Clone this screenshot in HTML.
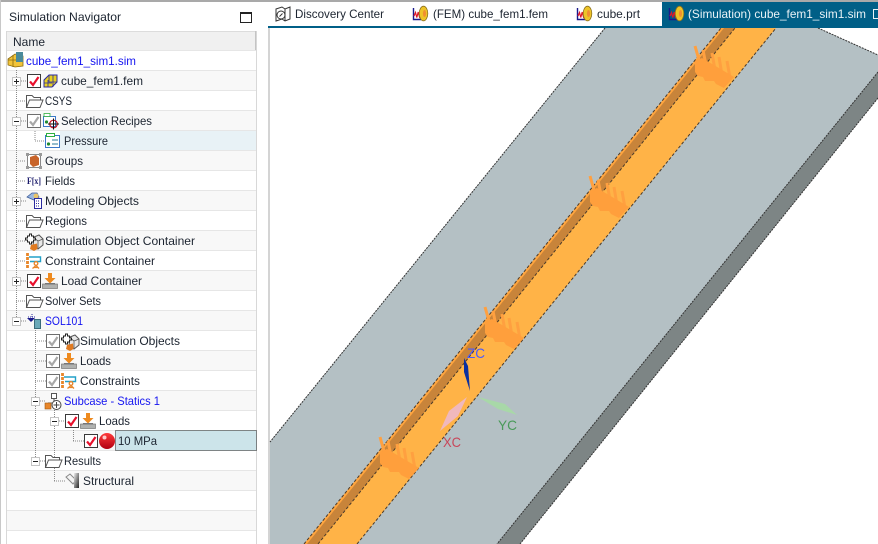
<!DOCTYPE html>
<html><head><meta charset="utf-8"><title>Simulation Navigator</title>
<style>
html,body{margin:0;padding:0;background:#fff;width:878px;height:544px;overflow:hidden}
svg{display:block}
text{font-family:"Liberation Sans",sans-serif;font-size:12px;fill:#1c2430}
.b{fill:#1414f0}
</style></head><body>
<svg width="878" height="544" viewBox="0 0 878 544" xmlns="http://www.w3.org/2000/svg">
<defs>
<g id="ck"><rect x=".5" y=".5" width="13" height="13" fill="#fff" stroke="#3a3a3a"/><path d="M3 7.5 L6 11 L11.5 3" fill="none" stroke="#e8102c" stroke-width="2.2"/></g>
<g id="gk"><rect x=".5" y=".5" width="13" height="13" fill="#fff" stroke="#6e6e6e"/><path d="M3 7.5 L6 11 L11.5 3" fill="none" stroke="#a8a8a8" stroke-width="2.2"/></g>
<g id="pl"><rect x=".5" y=".5" width="8" height="8" fill="#fff" stroke="#c4c4c4"/><path d="M2 4.500H7M4.500 2V7" stroke="#222"/></g>
<g id="mn"><rect x=".5" y=".5" width="8" height="8" fill="#fff" stroke="#c4c4c4"/><path d="M2 4.500H7" stroke="#222"/></g>
<g id="fo"><path d="M.5 14.500 V2.500 H6 L8 4.500 H14.500 V7 M.5 14.500 L3.500 7 H17 L14 14.500 Z" fill="#fff" stroke="#555"/></g>
<g id="ld"><path d="M6 0 H10 V5 H13.500 L8 10.500 L2.500 5 H6Z" fill="#ee8a1e"/><rect x="0.500" y="11" width="15" height="4.500" fill="#b0b2b0" stroke="#666" stroke-width=".6"/><rect x="3" y="10" width="10" height="1.500" fill="#777"/></g>
<g id="cn"><path d="M1.500 0 V16" stroke="#e8862a" stroke-width="2.800" stroke-dasharray="3 1"/><path d="M3 4 H14.500 V8.500 H4" fill="none" stroke="#22a0c8" stroke-width="1.400"/><circle cx="10" cy="10.500" r="1.800" fill="none" stroke="#e8862a" stroke-width="1.300"/><path d="M6.500 15.500 L10 12.500 L13 15.500 M8 14.500H12" fill="none" stroke="#e8862a" stroke-width="1.300"/></g>
<g id="so"><path d="M9 4 L14 2 L18 6 V12 L13 16 L8 13Z" fill="#e8e8e8" stroke="#555"/><path d="M13 8 L18 6 M13 8 V16 M13 8 L9 5" stroke="#555" fill="none" stroke-width=".8"/><path d="M6 12 L12 10.500 L12.500 16 L9 18 L5 16Z" fill="#e07a20"/><path d="M4.500 1 H6.500 V3 H8.500 V5 H10.500 V7 H8.500 V9 H6.500 V11 H4.500 V9 H2.500 V7 H.5 V5 H2.500 V3 H4.500Z" fill="#fff" stroke="#222" stroke-width="1"/></g>
<g id="pa"><path d="M1.500 2 V13.500 H9" fill="none" stroke="#1a1a8c" stroke-width="1.400"/><path d="M2 10 L3.500 6.500 L4.800 11.500 L6.200 6 L7.500 11 L9 8" fill="none" stroke="#e01828" stroke-width="1.200"/><ellipse cx="11.500" cy="7.500" rx="4.300" ry="7.300" fill="#eec428" stroke="#8a7020" stroke-width=".8"/><ellipse cx="12.500" cy="7.500" rx="1.600" ry="3.500" fill="#f09030"/></g>
<g id="comb"><path d="M590 176 L594 190 M598 180 L601 195 M607 183 L610 200 M614 187 L617 205 M622 191 L625 208" stroke="#ffa040" stroke-width="3" fill="none"/><path d="M590 191 L597 188 L629 207 L619 218 L611 214 L609 211 L600 211 L598 207 L593 206 L590 202Z" fill="#ff9f3c"/></g>
<linearGradient id="rb" x1="0" y1="0" x2="0" y2="1"><stop offset="0" stop-color="#ff3a3a"/><stop offset="1" stop-color="#b00010"/></linearGradient>
<linearGradient id="st" x1="0" y1="0" x2="1" y2="1"><stop offset="0" stop-color="#eee"/><stop offset="1" stop-color="#222"/></linearGradient>
</defs>

<!-- top lines -->
<rect x="0" y="0" width="878" height="2" fill="#a9a9a9"/>
<rect x="0" y="0" width="1" height="544" fill="#c8c8c8"/>
<rect x="268" y="27" width="2" height="517" fill="#d4d4d4"/>

<!-- viewport -->
<polygon points="605,28 818,28 878,55 878,72 497,544 270,544 270,442" fill="#b4c0c4"/>
<polygon points="878,72 878,98 520,544 497,544" fill="#7d8585"/>
<path d="M605 28 L270 442 M818 28 L878 55 M878 72 L497 544 M878 98 L520 544" stroke="#333" stroke-width="1" stroke-dasharray="2 1" fill="none"/>
<polygon points="304,544 721,28 776,28 357,544" fill="#ffb347"/>
<polygon points="304,544 721,28 725,28 307.500,544" fill="#ffa53f"/>
<polygon points="307,544 724,28 735,28 318,544" fill="#c8843a"/>
<path d="M304 544 L721 28 M318 544 L735 28 M357 544 L776 28" stroke="#4a3a2a" stroke-width="1" stroke-dasharray="3 2" fill="none"/>
<use href="#comb"/>
<use href="#comb" transform="translate(105,-130)"/>
<use href="#comb" transform="translate(-105,131)"/>
<use href="#comb" transform="translate(-210,261)"/>
<!-- triad -->
<polygon points="464,358 468,366 470,391 464,372" fill="#0a2fa0"/>
<polygon points="467,397 458,416 440,431 449,411" fill="#f0b8bc"/>
<polygon points="478,397 505,404 517,415 498,409" fill="#a8d8a8"/>
<text x="467" y="358" textLength="18" lengthAdjust="spacingAndGlyphs" style="fill:#4a5cff;font-size:14px">ZC</text>
<text x="443" y="447" textLength="18" lengthAdjust="spacingAndGlyphs" style="fill:#c8475a;font-size:14px">XC</text>
<text x="498" y="430" textLength="19" lengthAdjust="spacingAndGlyphs" style="fill:#4a9a5a;font-size:14px">YC</text>

<!-- tabs -->
<rect x="662" y="2" width="216" height="26" fill="#005f87"/>
<rect x="268" y="26" width="610" height="2" fill="#005f87"/>
<g fill="#fff" stroke="#333"><path d="M276 9 L282 7 L285 9 L290 7 V19 L285 21 L282 19 L276 21Z"/><path d="M285 9V21" fill="none"/><circle cx="281" cy="15" r="4"/><path d="M279.500 16.500L282.500 13.500" fill="none"/></g>
<text x="295" y="18" textLength="89" lengthAdjust="spacingAndGlyphs">Discovery Center</text>
<use href="#pa" x="412" y="6"/>
<text x="433" y="18" textLength="115" lengthAdjust="spacingAndGlyphs">(FEM) cube_fem1.fem</text>
<use href="#pa" x="576" y="6"/>
<text x="597" y="18" textLength="43" lengthAdjust="spacingAndGlyphs">cube.prt</text>
<use href="#pa" x="668" y="6"/>
<text x="688" y="18" textLength="178" lengthAdjust="spacingAndGlyphs" style="fill:#e8f2f6">(Simulation) cube_fem1_sim1.sim</text>
<rect x="873.500" y="9.500" width="6" height="9" fill="none" stroke="#e8f2f6"/>

<!-- navigator header -->
<text x="9" y="21" textLength="112" lengthAdjust="spacingAndGlyphs">Simulation Navigator</text>
<rect x="240.500" y="12.500" width="11" height="10" fill="#fff" stroke="#222"/><rect x="240" y="12" width="12" height="2" fill="#222"/>

<!-- table -->
<rect x="6" y="31" width="251" height="20" fill="#f0f0f0"/>
<rect x="6" y="31" width="251" height="1" fill="#dcdcdc"/>
<rect x="255" y="31" width="1" height="20" fill="#c4c4c4"/>
<text x="13" y="46" textLength="32" lengthAdjust="spacingAndGlyphs">Name</text>
<g fill="#f8f8f8">
<rect x="6" y="70" width="251" height="20"/><rect x="6" y="110" width="251" height="20"/><rect x="6" y="150" width="251" height="20"/><rect x="6" y="190" width="251" height="20"/><rect x="6" y="230" width="251" height="20"/><rect x="6" y="270" width="251" height="20"/><rect x="6" y="310" width="251" height="20"/><rect x="6" y="350" width="251" height="20"/><rect x="6" y="390" width="251" height="20"/><rect x="6" y="430" width="251" height="20"/><rect x="6" y="470" width="251" height="20"/><rect x="6" y="510" width="251" height="20"/>
</g>
<rect x="60" y="130" width="197" height="20" fill="#e8f2f6"/>
<g fill="#e6e6e6">
<rect x="6" y="50" width="251" height="1"/><rect x="6" y="70" width="251" height="1"/><rect x="6" y="90" width="251" height="1"/><rect x="6" y="110" width="251" height="1"/><rect x="6" y="130" width="251" height="1"/><rect x="6" y="150" width="251" height="1"/><rect x="6" y="170" width="251" height="1"/><rect x="6" y="190" width="251" height="1"/><rect x="6" y="210" width="251" height="1"/><rect x="6" y="230" width="251" height="1"/><rect x="6" y="250" width="251" height="1"/><rect x="6" y="270" width="251" height="1"/><rect x="6" y="290" width="251" height="1"/><rect x="6" y="310" width="251" height="1"/><rect x="6" y="330" width="251" height="1"/><rect x="6" y="350" width="251" height="1"/><rect x="6" y="370" width="251" height="1"/><rect x="6" y="390" width="251" height="1"/><rect x="6" y="410" width="251" height="1"/><rect x="6" y="430" width="251" height="1"/><rect x="6" y="450" width="251" height="1"/><rect x="6" y="470" width="251" height="1"/><rect x="6" y="490" width="251" height="1"/><rect x="6" y="510" width="251" height="1"/><rect x="6" y="530" width="251" height="1"/>
</g>
<rect x="6" y="31" width="1" height="513" fill="#d8d8d8"/>
<rect x="256" y="31" width="1" height="513" fill="#d8d8d8"/>
<rect x="115.500" y="430.500" width="141" height="20" fill="#cce4ea" stroke="#222" stroke-dasharray="1 1"/>

<!-- dotted connectors -->
<g stroke="#8a8a8a" stroke-dasharray="1 1" fill="none">
<path d="M16.500 70V321M35.500 330V461M54.500 410V481M73.500 430V441"/>
<path d="M21 81H27M16 101H26M21 121H27M35 131V141H45M16 161H26M16 181H26M21 201H26M16 221H26M16 241H26M16 261H26M21 281H27M16 301H26M21 321H27M35 341H46M35 361H46M35 381H46M40 401H45M59 421H65M73 441H84M40 461H45M54 481H65"/>
</g>

<!-- rows -->
<g>
<path d="M8 59 L15 54 L23 56 V66 L15 67 L8 65Z" fill="#f2c43a" stroke="#8a6a10" stroke-width=".8"/><path d="M16 52H23V62H16Z" fill="#4a8a9a"/><path d="M8 60H16M13 55V67" stroke="#8a6a10" stroke-width=".8"/>
<text class="b" x="26" y="65" textLength="110" lengthAdjust="spacingAndGlyphs">cube_fem1_sim1.sim</text>

<use href="#pl" x="12" y="77"/><use href="#ck" x="27" y="74"/>
<path d="M44 80 L49 75 H57 V82 L52 87 H44Z" fill="#e8d020" stroke="#2a2aa0"/><path d="M44 83H52M48 80V87M49 75V82H57M53 75V87" stroke="#2a2aa0" fill="none" stroke-width=".8"/>
<text x="61" y="85" textLength="82" lengthAdjust="spacingAndGlyphs">cube_fem1.fem</text>

<use href="#fo" x="26" y="93"/><text x="45" y="105" textLength="27" lengthAdjust="spacingAndGlyphs">CSYS</text>

<use href="#mn" x="12" y="117"/><use href="#gk" x="27" y="114"/>
<rect x="43.500" y="116.500" width="12" height="10" fill="#fff" stroke="#3a78c8"/><rect x="44" y="113.500" width="6" height="3" fill="#fff" stroke="#30b040" stroke-width=".8"/><circle cx="46.500" cy="122" r="1.600" fill="#208a30"/><circle cx="53.500" cy="124" r="3.800" fill="none" stroke="#c01020" stroke-width="1.200"/><path d="M53.500 118.500V129.500M48 124H59" stroke="#111"/>
<text x="61" y="125" textLength="91" lengthAdjust="spacingAndGlyphs">Selection Recipes</text>

<rect x="45.500" y="135.500" width="14" height="12" fill="#fff" stroke="#3a78c8"/><rect x="46.500" y="133.500" width="8" height="3" fill="#fff" stroke="#30b040"/><circle cx="48.500" cy="144" r="1.600" fill="#208a30"/><path d="M52 140H58M52 144H58" stroke="#2a7a9a"/>
<text x="64" y="145" textLength="44" lengthAdjust="spacingAndGlyphs">Pressure</text>

<rect x="27.500" y="154.500" width="13" height="13" fill="#fff" stroke="#888"/><path d="M30 157L36 155L39 158V165L33 167L30 164Z" fill="#c8642a"/><rect x="26" y="153" width="3" height="3" fill="#999"/><rect x="39" y="153" width="3" height="3" fill="#999"/><rect x="26" y="166" width="3" height="3" fill="#999"/><rect x="39" y="166" width="3" height="3" fill="#999"/>
<text x="45" y="165" textLength="38" lengthAdjust="spacingAndGlyphs">Groups</text>

<text x="27" y="184" textLength="14" lengthAdjust="spacingAndGlyphs" style="font-family:'Liberation Serif',serif;font-weight:bold;font-size:9px;fill:#1a1a6a">F[x]</text>
<text x="45" y="185" textLength="30" lengthAdjust="spacingAndGlyphs">Fields</text>

<use href="#pl" x="12" y="197"/>
<path d="M27 197 L32 193 H37 L39 197 L34 200Z" fill="#9ab8e0" stroke="#3a5a9a" stroke-width=".8"/><circle cx="36" cy="196" r="2.500" fill="#e8c46a"/><rect x="34.500" y="198.500" width="7" height="10" fill="#fff" stroke="#2a2aa0"/><path d="M36 201H40M36 203.500H40M36 206H40" stroke="#2a2aa0" stroke-dasharray="1 1"/>
<text x="45" y="205" textLength="94" lengthAdjust="spacingAndGlyphs">Modeling Objects</text>

<use href="#fo" x="26" y="213"/><text x="45" y="225" textLength="42" lengthAdjust="spacingAndGlyphs">Regions</text>

<use href="#so" x="25" y="233"/><text x="45" y="245" textLength="150" lengthAdjust="spacingAndGlyphs">Simulation Object Container</text>

<use href="#cn" x="26" y="253"/><text x="45" y="265" textLength="110" lengthAdjust="spacingAndGlyphs">Constraint Container</text>

<use href="#pl" x="12" y="277"/><use href="#ck" x="27" y="274"/><use href="#ld" x="42" y="273"/><text x="61" y="285" textLength="81" lengthAdjust="spacingAndGlyphs">Load Container</text>

<use href="#fo" x="26" y="293"/><text x="45" y="305" textLength="56" lengthAdjust="spacingAndGlyphs">Solver Sets</text>

<use href="#mn" x="12" y="317"/>
<path d="M28 317H36M32 314V322" stroke="#2a2aa0" stroke-dasharray="1 1"/><path d="M27 318H35L31 322Z" fill="#1a1a8a"/><rect x="34.500" y="319.500" width="6" height="9" fill="#6aa8b8" stroke="#3a6a7a"/>
<text class="b" x="45" y="325" textLength="38" lengthAdjust="spacingAndGlyphs">SOL101</text>

<use href="#gk" x="46" y="334"/><use href="#so" x="61" y="333"/><text x="80" y="345" textLength="100" lengthAdjust="spacingAndGlyphs">Simulation Objects</text>
<use href="#gk" x="46" y="354"/><use href="#ld" x="61" y="353"/><text x="80" y="365" textLength="31" lengthAdjust="spacingAndGlyphs">Loads</text>
<use href="#gk" x="46" y="374"/><use href="#cn" x="61" y="373"/><text x="80" y="385" textLength="60" lengthAdjust="spacingAndGlyphs">Constraints</text>

<use href="#mn" x="31" y="397"/>
<rect x="51.500" y="393.500" width="5" height="5" fill="#fff" stroke="#555"/><path d="M54 399V403H48" fill="none" stroke="#555"/><rect x="45" y="403" width="6" height="6" fill="#e8862a" stroke="#a05a10" stroke-width=".6"/><circle cx="56.500" cy="405" r="4.500" fill="#fff" stroke="#444"/><path d="M53.500 405H59.500M56.500 402V408" stroke="#444"/>
<text class="b" x="64" y="405" textLength="96" lengthAdjust="spacingAndGlyphs">Subcase - Statics 1</text>

<use href="#mn" x="50" y="417"/><use href="#ck" x="65" y="414"/><use href="#ld" x="80" y="413"/><text x="99" y="425" textLength="31" lengthAdjust="spacingAndGlyphs">Loads</text>

<use href="#ck" x="84" y="434"/>
<circle cx="107" cy="441" r="8" fill="url(#rb)"/><circle cx="104.500" cy="437.500" r="2" fill="#ffc8c8"/>
<text x="118" y="445" textLength="39" lengthAdjust="spacingAndGlyphs">10 MPa</text>

<use href="#mn" x="31" y="457"/><use href="#fo" x="45" y="453"/><text x="64" y="465" textLength="37" lengthAdjust="spacingAndGlyphs">Results</text>

<path d="M66 477 L70 474 L76 480 L73 484Z" fill="#f4f4f4" stroke="#888"/><rect x="74" y="473" width="5" height="15" fill="url(#st)"/>
<text x="83" y="485" textLength="51" lengthAdjust="spacingAndGlyphs">Structural</text>
</g>
</svg>
</body></html>
